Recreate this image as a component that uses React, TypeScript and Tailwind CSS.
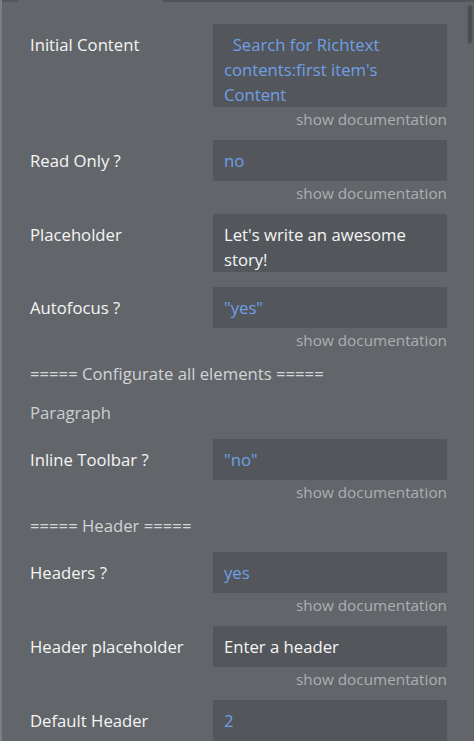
import React from "react";

type Field = {
  label: string;
  lines: string[];
  blue?: boolean;
  h: number;
  doc?: boolean;
};

const FieldRow = ({ f }: { f: Field }) => (
  <div className={f.doc ? "mb-[9px]" : "mb-[15px]"}>
    <div className="flex items-start">
      <div className="w-[183px] shrink-0 pt-[8px] text-[16.7px] leading-[25px] text-[#f5f5f5]">
        {f.label}
      </div>
      <div
        className={`w-[234px] shrink-0 overflow-hidden bg-[#53575b] pl-[11px] pt-[8px] text-[16.7px] leading-[25px] ${
          f.blue ? "text-[#6f9fe6]" : "text-[#f5f5f5]"
        }`}
        style={{ height: f.h }}
      >
        {f.lines.map((l, i) => (
          <div key={i} className="whitespace-pre">
            {l}
          </div>
        ))}
      </div>
    </div>
    {f.doc && (
      <div className="flex h-[24px] w-[417px] items-center justify-end text-[15.3px] leading-[24px] text-[#acafb2]">
        show documentation
      </div>
    )}
  </div>
);

const Heading = ({ text, color }: { text: string; color: string }) => (
  <div className={`mb-[14px] text-[16.7px] leading-[25px] ${color}`}>{text}</div>
);

export default function App() {
  const f1: Field = {
    label: "Initial Content",
    lines: ["\u00a0\u00a0Search for Richtext", "contents:first item's", "Content"],
    blue: true,
    h: 83,
    doc: true,
  };
  return (
    <div
      className="relative h-[741px] w-[474px] overflow-hidden bg-[#62666a]"
      style={{ fontFamily: '"Open Sans", "Noto Sans", sans-serif' }}
    >
      {/* top edge strip */}
      <div className="flex h-[2px] w-full">
        <div className="w-[18px] bg-[#54585c]" />
        <div className="w-[145px] bg-[#62666a]" />
        <div className="w-[302px] bg-[#4f5357]" />
        <div className="flex-1 bg-[#54585c]" />
      </div>
      {/* left edge */}
      <div className="absolute left-0 top-0 h-full w-[2px] bg-[#7c8084]" />
      {/* scrollbar */}
      <div className="absolute right-[1px] top-[5px] h-[39px] w-[6px] rounded-[2px] border border-[#5a5e62] bg-[#4b4f53]" />

      <div className="pl-[30px] pt-[22px]">
        <FieldRow f={f1} />
        <FieldRow f={{ label: "Read Only ?", lines: ["no"], blue: true, h: 41, doc: true }} />
        <FieldRow
          f={{ label: "Placeholder", lines: ["Let's write an awesome", "story!"], h: 58 }}
        />
        <FieldRow f={{ label: "Autofocus ?", lines: ['"yes"'], blue: true, h: 41, doc: true }} />
        <Heading text="===== Configurate all elements =====" color="text-[#d2d4d6]" />
        <Heading text="Paragraph" color="text-[#cdcfd1]" />
        <FieldRow f={{ label: "Inline Toolbar ?", lines: ['"no"'], blue: true, h: 41, doc: true }} />
        <Heading text="===== Header =====" color="text-[#d2d4d6]" />
        <FieldRow f={{ label: "Headers ?", lines: ["yes"], blue: true, h: 41, doc: true }} />
        <FieldRow
          f={{ label: "Header placeholder", lines: ["Enter a header"], h: 41, doc: true }}
        />
        <FieldRow f={{ label: "Default Header", lines: ["2"], blue: true, h: 41 }} />
      </div>
    </div>
  );
}
